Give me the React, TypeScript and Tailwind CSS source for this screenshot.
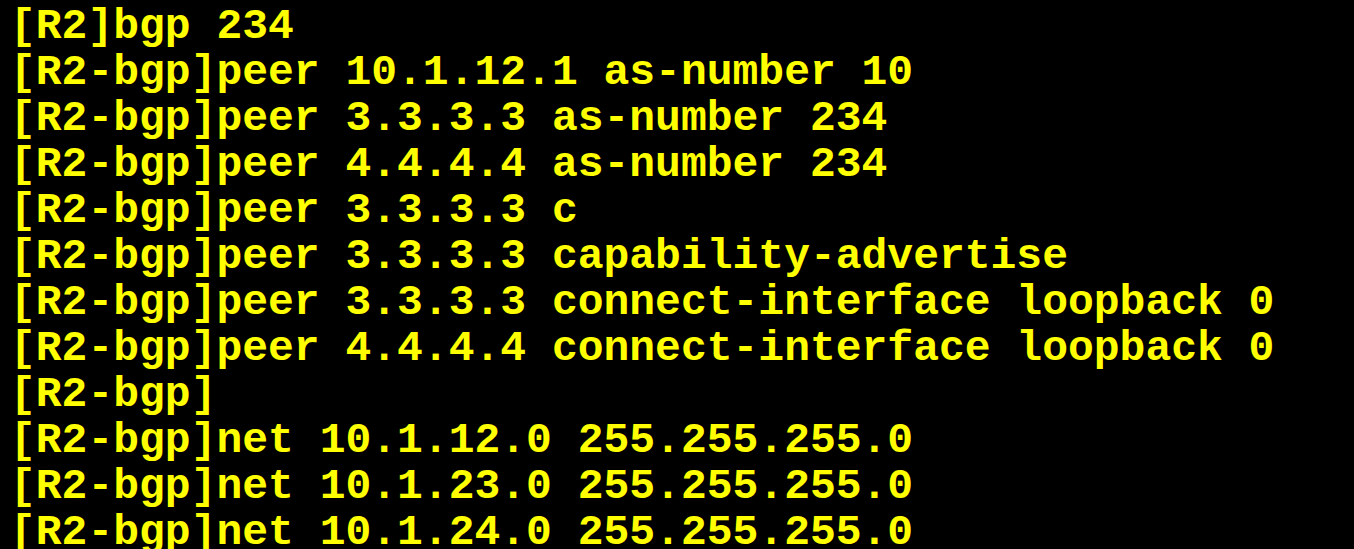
const lines = [
  '[R2]bgp 234',
  '[R2-bgp]peer 10.1.12.1 as-number 10',
  '[R2-bgp]peer 3.3.3.3 as-number 234',
  '[R2-bgp]peer 4.4.4.4 as-number 234',
  '[R2-bgp]peer 3.3.3.3 c',
  '[R2-bgp]peer 3.3.3.3 capability-advertise',
  '[R2-bgp]peer 3.3.3.3 connect-interface loopback 0',
  '[R2-bgp]peer 4.4.4.4 connect-interface loopback 0',
  '[R2-bgp]',
  '[R2-bgp]net 10.1.12.0 255.255.255.0',
  '[R2-bgp]net 10.1.23.0 255.255.255.0',
  '[R2-bgp]net 10.1.24.0 255.255.255.0',
]

export default function App() {
  return (
    <div className="w-[1354px] h-[549px] overflow-hidden bg-black pl-[10px] pt-[4px]">
      <pre className="font-['Liberation_Mono','Courier_New',monospace] font-bold text-[43px] leading-[46px] text-[#ffff00]">
        {lines.map((l, i) => (
          <div key={i}>{l}</div>
        ))}
      </pre>
    </div>
  )
}
